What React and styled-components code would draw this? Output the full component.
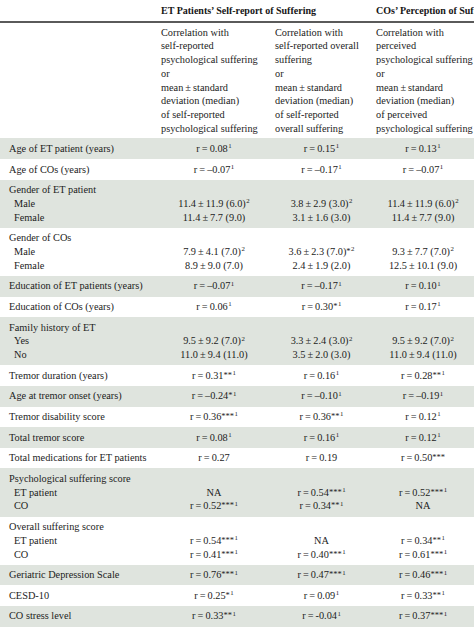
import React from "react";
import styled, { createGlobalStyle } from "styled-components";

const Global = createGlobalStyle`
  html, body { margin: 0; padding: 0; background: #ffffff; }
  body { overflow: hidden; }
  #root { width: 474px; height: 631px; overflow: hidden; }
`;

const Page = styled.div`
  width: 474px;
  overflow: hidden;
  font-family: "Liberation Serif", "Times New Roman", serif;
  font-size: 10.3px;
  line-height: 13.75px;
  color: #1c1c1c;
`;

const Table = styled.table`
  border-collapse: collapse;
  table-layout: fixed;
  width: 474px;
`;

const GroupHead = styled.th`
  font-weight: bold;
  font-size: 10px;
  text-align: left;
  padding: 4px 4px 3.3px;
  white-space: nowrap;
  overflow: visible;
  border-bottom: 2px solid #5a5a5a;
  color: #161616;
`;

const SubHead = styled.th`
  font-weight: normal;
  text-align: left;
  vertical-align: top;
  padding: 2.6px 4px 2.8px;
  white-space: nowrap;
  overflow: visible;
`;

const Row = styled.tr`
  background: ${(p) => (p.$shade ? "#dfe4de" : "#ffffff")};
`;

const LabelCell = styled.td`
  padding: 3.45px 4px 3.45px 9px;
  text-align: left;
  vertical-align: top;
  white-space: nowrap;
`;

const ValueCell = styled.td`
  padding: 3.45px 4px;
  text-align: center;
  vertical-align: top;
  white-space: nowrap;
`;

const Line = styled.div`
  height: 13.75px;
  padding-left: ${(p) => (p.$indent ? "5px" : "0")};
`;

const Sup = styled.sup`
  font-size: 6.8px;
  line-height: 0;
  vertical-align: 3.6px;
  margin-left: 0.5px;
`;

const Star = styled.span`
  font-size: 8.5px;
  vertical-align: 1px;
`;

// parse "r=0.31**^1" style strings
function Value({ v }) {
  if (!v) return <>&nbsp;</>;
  const m = v.match(/^([^*^]*)(\**)(?:\^(\d))?$/);
  const base = m ? m[1] : v;
  const stars = m ? m[2] : "";
  const sup = m ? m[3] : null;
  const text = base
    .replace(/^r=/, "r\u2009=\u2009")
    .replace("±", "\u2009±\u2009");
  return (
    <>
      {text}
      {stars && <Star>{stars}</Star>}
      {sup && <Sup>{sup}</Sup>}
    </>
  );
}

const rows = [
  { label: "Age of ET patient (years)", v: ["r=0.08^1", "r=0.15^1", "r=0.13^1"] },
  { label: "Age of COs (years)", v: ["r=–0.07^1", "r=–0.17^1", "r=–0.07^1"] },
  {
    label: "Gender of ET patient",
    subs: [
      ["Male", "11.4±11.9 (6.0)^2", "3.8±2.9 (3.0)^2", "11.4±11.9 (6.0)^2"],
      ["Female", "11.4±7.7 (9.0)", "3.1±1.6 (3.0)", "11.4±7.7 (9.0)"],
    ],
  },
  {
    label: "Gender of COs",
    subs: [
      ["Male", "7.9±4.1 (7.0)^2", "3.6±2.3 (7.0)*^2", "9.3±7.7 (7.0)^2"],
      ["Female", "8.9±9.0 (7.0)", "2.4±1.9 (2.0)", "12.5±10.1 (9.0)"],
    ],
  },
  { label: "Education of ET patients (years)", v: ["r=–0.07^1", "r=–0.17^1", "r=0.10^1"] },
  { label: "Education of COs (years)", v: ["r=0.06^1", "r=0.30*^1", "r=0.17^1"] },
  {
    label: "Family history of ET",
    subs: [
      ["Yes", "9.5±9.2 (7.0)^2", "3.3±2.4 (3.0)^2", "9.5±9.2 (7.0)^2"],
      ["No", "11.0±9.4 (11.0)", "3.5±2.0 (3.0)", "11.0±9.4 (11.0)"],
    ],
  },
  { label: "Tremor duration (years)", v: ["r=0.31**^1", "r=0.16^1", "r=0.28**^1"] },
  { label: "Age at tremor onset (years)", v: ["r=–0.24*^1", "r=–0.10^1", "r=–0.19^1"] },
  { label: "Tremor disability score", v: ["r=0.36***^1", "r=0.36**^1", "r=0.12^1"] },
  { label: "Total tremor score", v: ["r=0.08^1", "r=0.16^1", "r=0.12^1"] },
  { label: "Total medications for ET patients", v: ["r=0.27", "r=0.19", "r=0.50***"] },
  {
    label: "Psychological suffering score",
    subs: [
      ["ET patient", "NA", "r=0.54***^1", "r=0.52***^1"],
      ["CO", "r=0.52***^1", "r=0.34**^1", "NA"],
    ],
  },
  {
    label: "Overall suffering score",
    subs: [
      ["ET patient", "r=0.54***^1", "NA", "r=0.34**^1"],
      ["CO", "r=0.41***^1", "r=0.40***^1", "r=0.61***^1"],
    ],
  },
  { label: "Geriatric Depression Scale", v: ["r=0.76***^1", "r=0.47***^1", "r=0.46***^1"] },
  { label: "CESD-10", v: ["r=0.25*^1", "r=0.09^1", "r=0.33**^1"] },
  { label: "CO stress level", v: ["r=0.33**^1", "r=-0.04^1", "r=0.37***^1"] },
];

const subHeads = [
  [
    "Correlation with",
    "self-reported",
    "psychological suffering",
    "or",
    "mean ± standard",
    "deviation (median)",
    "of self-reported",
    "psychological suffering",
  ],
  [
    "Correlation with",
    "self-reported overall",
    "suffering",
    "or",
    "mean ± standard",
    "deviation (median)",
    "of self-reported",
    "overall suffering",
  ],
  [
    "Correlation with",
    "perceived",
    "psychological suffering",
    "or",
    "mean ± standard",
    "deviation (median)",
    "of perceived",
    "psychological suffering",
  ],
];

export default function App() {
  return (
    <Page>
      <Global />
      <Table>
        <colgroup>
          <col style={{ width: 157 }} />
          <col style={{ width: 114 }} />
          <col style={{ width: 101 }} />
          <col style={{ width: 102 }} />
        </colgroup>
        <thead>
          <tr>
            <GroupHead />
            <GroupHead colSpan={2}>ET Patients’ Self-report of Suffering</GroupHead>
            <GroupHead>COs’ Perception of Suffering</GroupHead>
          </tr>
          <tr>
            <SubHead />
            {subHeads.map((lines, i) => (
              <SubHead key={i}>
                {lines.map((l, j) => (
                  <Line key={j}>{l.replace(" ± ", "\u2009±\u2009")}</Line>
                ))}
              </SubHead>
            ))}
          </tr>
        </thead>
        <tbody>
          {rows.map((r, i) => (
            <Row key={i} $shade={i % 2 === 0}>
              {r.subs ? (
                <>
                  <LabelCell>
                    <Line>{r.label}</Line>
                    {r.subs.map((s, k) => (
                      <Line key={k} $indent>
                        {s[0]}
                      </Line>
                    ))}
                  </LabelCell>
                  {[1, 2, 3].map((c) => (
                    <ValueCell key={c}>
                      <Line>&nbsp;</Line>
                      {r.subs.map((s, k) => (
                        <Line key={k}>
                          <Value v={s[c]} />
                        </Line>
                      ))}
                    </ValueCell>
                  ))}
                </>
              ) : (
                <>
                  <LabelCell>
                    <Line>{r.label}</Line>
                  </LabelCell>
                  {r.v.map((v, c) => (
                    <ValueCell key={c}>
                      <Line>
                        <Value v={v} />
                      </Line>
                    </ValueCell>
                  ))}
                </>
              )}
            </Row>
          ))}
        </tbody>
      </Table>
    </Page>
  );
}
